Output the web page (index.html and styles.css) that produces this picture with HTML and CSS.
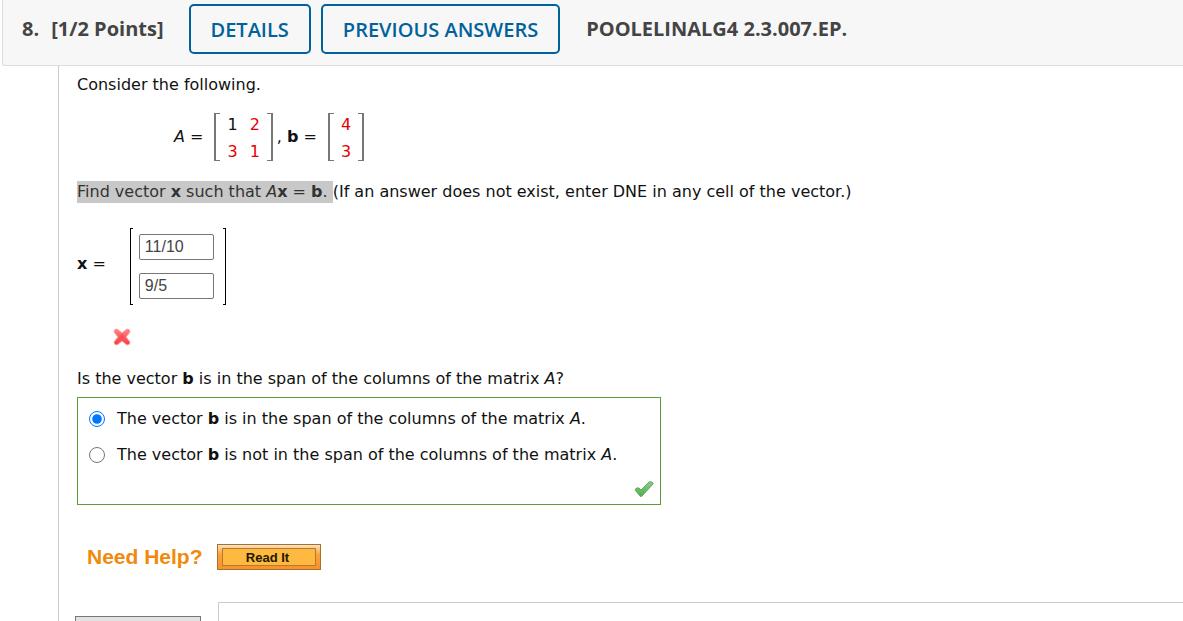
FILE: index.html
```html
<!doctype html>
<html lang="en">
<head>
    <meta charset="UTF-8">
    <meta name="viewport" content="width=device-width, initial-scale=1.0">
    <title>POOLELINALG4 2.3.007.EP.</title>
    <link rel="stylesheet" href="styles.css">
</head>
<body>
    <header class="question-header">
        <span class="number">8.</span>
        <span class="points">[1/2 Points]</span>
        <button type="button" class="btn">DETAILS</button>
        <button type="button" class="btn">PREVIOUS ANSWERS</button>
        <span class="code">POOLELINALG4 2.3.007.EP.</span>
    </header>
    <main class="question">
        <p>Consider the following.</p>
        <div class="equation">
            <span><i>A</i> =</span>
            <div class="matrix">
                <span>1</span><span class="red">2</span>
                <span class="red">3</span><span class="red">1</span>
            </div>
            <span class="next-var">, <b>b</b> =</span>
            <div class="matrix one-col">
                <span class="red">4</span>
                <span class="red">3</span>
            </div>
        </div>
        <p><mark>Find vector <b>x</b> such that <i>A</i><b>x</b> = <b>b</b>. </mark>(If an answer does not exist, enter DNE in any cell of the vector.)</p>

        <div class="answer">
            <span class="var"><b>x</b> =</span>
            <div class="vector">
                <input type="text" value="11/10" aria-label="first entry of x">
                <input type="text" value="9/5" aria-label="second entry of x">
            </div>
        </div>
        <svg class="wrong" width="18" height="18" viewBox="0 0 18 18" role="img" aria-label="incorrect">
            <defs>
                <linearGradient id="redFill" x1="0" y1="0" x2="0" y2="1">
                    <stop offset="0" stop-color="#ff8585"/>
                    <stop offset="1" stop-color="#f9393f"/>
                </linearGradient>
            </defs>
            <path d="M4 1 L9 5 L14 1 Q17 1 17 4 L13 9 L17 14 Q17 17 14 17 L9 13 L4 17 Q1 17 1 14 L5 9 L1 4 Q1 1 4 1Z" fill="url(#redFill)" stroke="#ff9a9c" stroke-width="1" stroke-linejoin="round"/>
            <path d="M6 9 L9 6 L12 9 L9 12Z" fill="#f5484d" opacity=".6"/>
        </svg>

        <p id="span-question">Is the vector <b>b</b> is in the span of the columns of the matrix <i>A</i>?</p>
        <div class="choices" role="radiogroup" aria-labelledby="span-question">
            <label><input type="radio" name="span" checked><span>The vector <b>b</b> is in the span of the columns of the matrix <i>A</i>.</span></label>
            <label><input type="radio" name="span"><span>The vector <b>b</b> is not in the span of the columns of the matrix <i>A</i>.</span></label>
            <svg class="right" width="20" height="18" viewBox="0 0 20 18" role="img" aria-label="correct">
                <defs>
                    <linearGradient id="greenFill" x1="0" y1="0" x2="0" y2="1">
                        <stop offset="0" stop-color="#86d08a"/>
                        <stop offset="1" stop-color="#4fae52"/>
                    </linearGradient>
                </defs>
                <path d="M1 10 Q2 7 5 8 L7 10 L15 2 Q17 1 19 3 L19 4 L8 16 Q7 17 6 16Z" fill="url(#greenFill)" stroke="#62a765" stroke-width="1" stroke-linejoin="round"/>
            </svg>
        </div>

        <div class="help">
            <span class="help-title">Need Help?</span>
            <button type="button" class="read-it"><span>Read It</span></button>
        </div>
        <div class="footer">
            <button type="button" class="submit" aria-label="Submit Answer"></button>
            <div class="panel"></div>
        </div>
    </main>
</body>
</html>
```
FILE: styles.css
```css
*{
    box-sizing: border-box;
}
body{
    margin: 0;
    height: 100vh;
    overflow: hidden;
    background-color: #fff;
    color: #111;
    font-family: Verdana, "DejaVu Sans", sans-serif;
    font-size: 16px;
    line-height: 22px;
}
p{
    margin: 0;
}
.question-header{
    display: flex;
    align-items: center;
    margin-left: 2px;
    padding: 4px 0 11px 19px;
    background-color: #f7f7f7;
    border: 1px solid #ddd;
    border-width: 0 0 1px 1px;
    border-radius: 0 0 0 3px;
    color: #444;
    font-family: "Open Sans", sans-serif;
    font-size: 20px;
    font-weight: 700;
}
.points{
    margin: 0 25px 0 12px;
}
.btn{
    height: 50px;
    padding: 0 20px;
    margin-right: 10px;
    background-color: transparent;
    border: 2px solid #00629b;
    border-radius: 5px;
    color: #00629b;
    font-family: inherit;
    font-size: 20px;
    font-weight: 600;
}
.code{
    margin-left: 16px;
}
.question{
    margin-left: 58px;
    padding: 8px 0 0 18px;
    border-left: 1px solid #ccc;
}
.equation{
    display: flex;
    align-items: center;
    margin: 17px 0 20px 97px;
}
.matrix{
    display: grid;
    grid-template-columns: auto auto;
    column-gap: 12px;
    row-gap: 5px;
    height: 48px;
    padding: 2px 11px 0;
    margin-left: 11px;
    align-content: center;
    /* brackets: two sides plus short ticks at the corners */
    border: solid #777;
    border-width: 0 2px;
    background: linear-gradient(#777, #777) 0 0 / 4px 1px no-repeat,
        linear-gradient(#777, #777) 100% 0 / 4px 1px no-repeat,
        linear-gradient(#777, #777) 0 100% / 4px 1px no-repeat,
        linear-gradient(#777, #777) 100% 100% / 4px 1px no-repeat;
}
.one-col{
    grid-template-columns: auto;
}
.next-var{
    margin-left: 4px;
}
.red{
    color: #e60000;
}
mark{
    display: inline-block;
    white-space: pre;
    background-color: #c8c8c8;
    color: #333;
}
.answer{
    display: flex;
    align-items: center;
    margin-top: 25px;
}
.var{
    padding-bottom: 6px;
}
.vector{
    display: grid;
    gap: 13px;
    margin-left: 24px;
    padding: 6px 11px 6px 8px;
    border: solid #000;
    border-width: 0 1px;
    background: linear-gradient(#000, #000) 0 0 / 2px 1px no-repeat,
        linear-gradient(#000, #000) 100% 0 / 2px 1px no-repeat,
        linear-gradient(#000, #000) 0 100% / 2px 1px no-repeat,
        linear-gradient(#000, #000) 100% 100% / 2px 1px no-repeat;
}
.vector input{
    width: 75px;
    height: 26px;
    padding: 0 5px;
    border: 1px solid #767676;
    border-radius: 2px;
    color: #444;
    font-family: "Liberation Sans", Arial, sans-serif;
    font-size: 16px;
}
.wrong{
    display: block;
    margin: 23px 0 22px 36px;
}
.choices{
    display: flex;
    flex-direction: column;
    gap: 14px;
    width: 584px;
    max-width: 100%;
    margin-top: 7px;
    padding: 10px 6px 6px 11px;
    border: 1px solid #5b9f34;
}
.choices label{
    display: flex;
    align-items: center;
}
.choices input{
    width: 16px;
    height: 16px;
    margin: 0 12px 0 0;
    accent-color: #0075ff;
}
.right{
    align-self: flex-end;
}
.help{
    display: flex;
    align-items: center;
    margin: 39px 0 32px 10px;
}
.help-title{
    color: #f08a0c;
    font-family: "Liberation Sans", Arial, sans-serif;
    font-size: 21px;
    font-weight: 700;
}
.read-it{
    width: 104px;
    height: 26px;
    margin-left: 14px;
    padding: 0 4px;
    border: 1px solid #a8722a;
    background: linear-gradient(#fbe3c5, #f9a13c 40%, #f7922d);
    color: #221800;
    font-family: "Liberation Sans", Arial, sans-serif;
    font-size: 13px;
    font-weight: 700;
}
.read-it span{
    display: block;
    height: 18px;
    padding-right: 2px;
    border: 1px solid #b9792b;
    background-color: #fdb940;
    line-height: 17px;
}
.footer{
    display: flex;
    gap: 17px;
    margin-left: -2px;
}
.submit{
    width: 126px;
    height: 36px;
    margin-top: 14px;
    border: 1px solid #767676;
    background-color: #e3e3e3;
}
.panel{
    flex: 1;
    height: 60px;
    border: 1px solid #ccc;
    border-width: 1px 0 0 1px;
}
```
